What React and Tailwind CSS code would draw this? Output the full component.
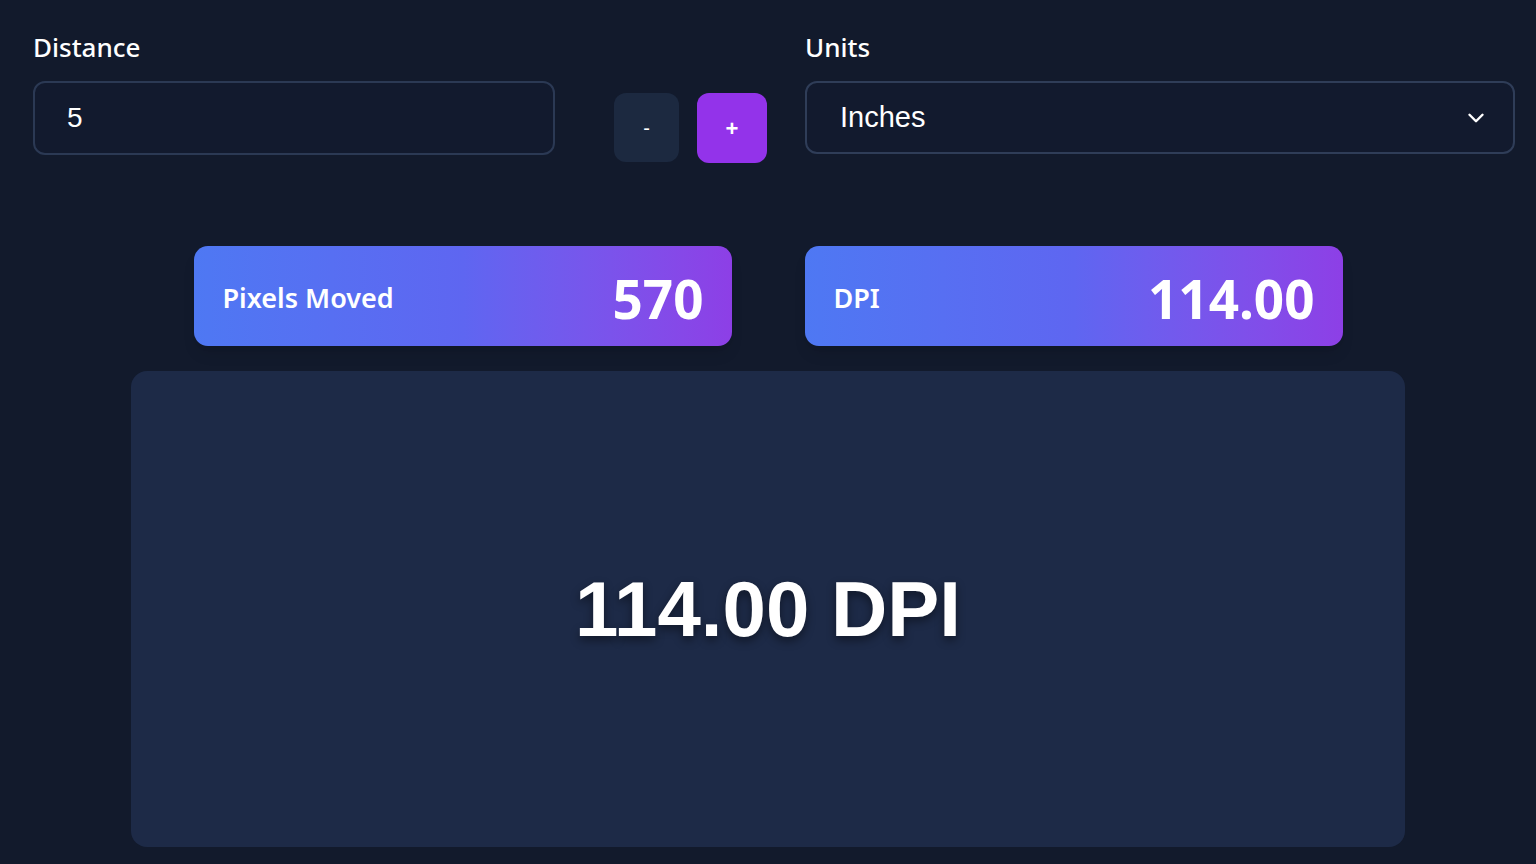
import { ChevronDown } from "lucide-react";

export default function App() {
  return (
    <div className="min-h-screen w-full bg-[#121a2c] overflow-hidden">
      {/* inputs row */}
      <div className="flex items-start pl-[33px] pt-[30px]">
        <div className="w-[522px] flex flex-col">
          <label className="text-[26px] leading-[34px] font-medium text-white font-['Noto_Sans',sans-serif]">
            Distance
          </label>
          <div className="mt-[17px] h-[74px] rounded-xl border-2 border-[#2b3954] bg-[#121a2e] flex items-center px-[32px]">
            <span className="text-[28px] text-white font-['Liberation_Sans',sans-serif]">5</span>
          </div>
        </div>

        <div className="ml-[59px] mt-[63px] flex gap-[18px]">
          <button className="w-[65px] h-[69px] rounded-xl bg-[#1c2940] text-white text-[20px] font-['Liberation_Sans',sans-serif] flex items-center justify-center">
            -
          </button>
          <button className="w-[70px] h-[70px] rounded-xl bg-[#9333ea] text-white text-[22px] font-semibold font-['Liberation_Sans',sans-serif] flex items-center justify-center">
            +
          </button>
        </div>

        <div className="ml-[38px] w-[710px] flex flex-col">
          <label className="text-[26px] leading-[34px] font-medium text-white font-['Noto_Sans',sans-serif]">
            Units
          </label>
          <div className="mt-[17px] h-[73px] rounded-xl border-2 border-[#2f3d58] bg-[#121a2e] flex items-center justify-between pl-[33px] pr-[24px]">
            <span className="text-[29px] text-white font-['Liberation_Sans',sans-serif]">Inches</span>
            <ChevronDown className="w-[26px] h-[26px] text-white" strokeWidth={2.25} />
          </div>
        </div>
      </div>

      {/* result cards */}
      <div className="mt-[83px] flex justify-center gap-[73px]">
        <div className="w-[538px] h-[100px] rounded-[14px] bg-gradient-to-r from-[#4e78f3] via-[#5e66f1] to-[#8d3fe6] flex items-center justify-between pl-[29px] pr-[28px] pt-[5px] shadow-lg">
          <span className="text-[27px] font-semibold text-white font-['Noto_Sans',sans-serif]">Pixels Moved</span>
          <span className="text-[53px] font-bold text-white font-['Noto_Sans',sans-serif] leading-none">570</span>
        </div>
        <div className="w-[538px] h-[100px] rounded-[14px] bg-gradient-to-r from-[#4e78f3] via-[#5e66f1] to-[#8d3fe6] flex items-center justify-between pl-[29px] pr-[28px] pt-[5px] shadow-lg">
          <span className="text-[27px] font-semibold text-white font-['Noto_Sans',sans-serif]">DPI</span>
          <span className="text-[53px] font-bold text-white font-['Noto_Sans',sans-serif] leading-none">114.00</span>
        </div>
      </div>

      {/* display panel */}
      <div className="mt-[25px] mx-auto w-[1274px] h-[476px] rounded-2xl bg-[#1d2a47] flex items-center justify-center">
        <span className="text-[78px] font-bold text-white font-['Liberation_Sans',sans-serif] [text-shadow:0_4px_10px_rgba(0,0,0,0.45)]">
          114.00 DPI
        </span>
      </div>
    </div>
  );
}
